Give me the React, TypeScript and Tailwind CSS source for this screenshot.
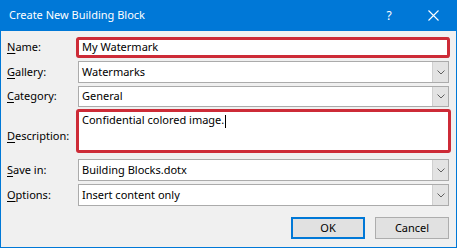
import React from "react";

const font = { fontFamily: '"Noto Sans", "Segoe UI", sans-serif' };

function Chevron() {
  return (
    <svg width="8" height="5" viewBox="0 0 8 5" className="text-[#606060]">
      <polyline points="0.5 0.5 4 4 7.5 0.5" fill="none" stroke="currentColor" strokeWidth="1" />
    </svg>
  );
}

function Label({ letter, rest, className = "" }: { letter: string; rest: string; className?: string }) {
  return (
    <div className={`w-[71px] shrink-0 flex text-[11px] text-black ${className}`}>
      <span>
        <span className="underline underline-offset-2">{letter}</span>
        {rest}
      </span>
    </div>
  );
}

function Field({ value, dropdown, highlight }: { value: string; dropdown?: boolean; highlight?: boolean }) {
  return (
    <div className="relative flex-1 h-full flex border border-[#ababab] bg-white">
      <div className="flex-1 flex items-center pl-[3px] text-[11px] text-black">{value}</div>
      {dropdown && (
        <div className="w-[16px] flex items-center justify-center bg-[#e3e3e3] border-l border-[#d0d0d0]">
          <Chevron />
        </div>
      )}
      {highlight && (
        <div className="absolute -left-[3px] -right-[2px] -top-[1px] -bottom-[1px] border-[3px] border-[#cd2b37] rounded-[3px]" />
      )}
    </div>
  );
}

export default function App() {
  return (
    <div className="w-[457px] h-[248px] flex flex-col bg-[#0078d7]" style={font}>
      {/* Title bar */}
      <div className="h-[31px] shrink-0 flex items-center text-white">
        <div className="pl-[9px] text-[11px] flex-1">Create New Building Block</div>
        <div className="w-[14px] text-[12px] mr-[32px] text-center">?</div>
        <svg width="11" height="11" viewBox="0 0 11 11" className="mr-[18px]">
          <path d="M0.5 0.5 L10.5 10.5 M10.5 0.5 L0.5 10.5" stroke="white" strokeWidth="1.1" />
        </svg>
      </div>

      {/* Body */}
      <div className="flex-1 mx-[1px] mb-[1px] bg-[#f0f0f0] pt-[6px] pl-[6px] pr-[7px] flex flex-col">
        <div className="h-[21px] flex items-center">
          <Label letter="N" rest="ame:" />
          <Field value="My Watermark" highlight />
        </div>
        <div className="h-[22px] mt-[3px] flex items-center">
          <Label letter="G" rest="allery:" />
          <Field value="Watermarks" dropdown />
        </div>
        <div className="h-[21px] mt-[3px] flex items-center">
          <Label letter="C" rest="ategory:" />
          <Field value="General" dropdown />
        </div>
        <div className="h-[44px] mt-[2px] flex items-stretch">
          <Label letter="D" rest="escription:" className="items-end pb-[9px]" />
          <div className="relative flex-1 border border-[#ababab] bg-white pl-[3px] pt-[2px] text-[11px] text-black">
            <span>Confidential colored image.</span>
            <span className="inline-block w-px h-[13px] bg-black align-middle ml-px" />
            <div className="absolute -left-[3px] -right-[3px] -top-[1px] -bottom-[1px] border-[3px] border-[#cd2b37] rounded-[3px]" />
          </div>
        </div>
        <div className="h-[22px] mt-[6px] flex items-center">
          <Label letter="S" rest="ave in:" />
          <Field value="Building Blocks.dotx" dropdown />
        </div>
        <div className="h-[22px] mt-[3px] flex items-center">
          <Label letter="O" rest="ptions:" />
          <Field value="Insert content only" dropdown />
        </div>
        <div className="mt-[11px] flex justify-end gap-[10px]">
          <button className="w-[74px] h-[22px] bg-[#e1e1e1] border-2 border-[#0078d7] text-[11px] text-black">
            OK
          </button>
          <button className="w-[74px] h-[22px] bg-[#e1e1e1] border border-[#adadad] text-[11px] text-black">
            Cancel
          </button>
        </div>
      </div>
    </div>
  );
}
